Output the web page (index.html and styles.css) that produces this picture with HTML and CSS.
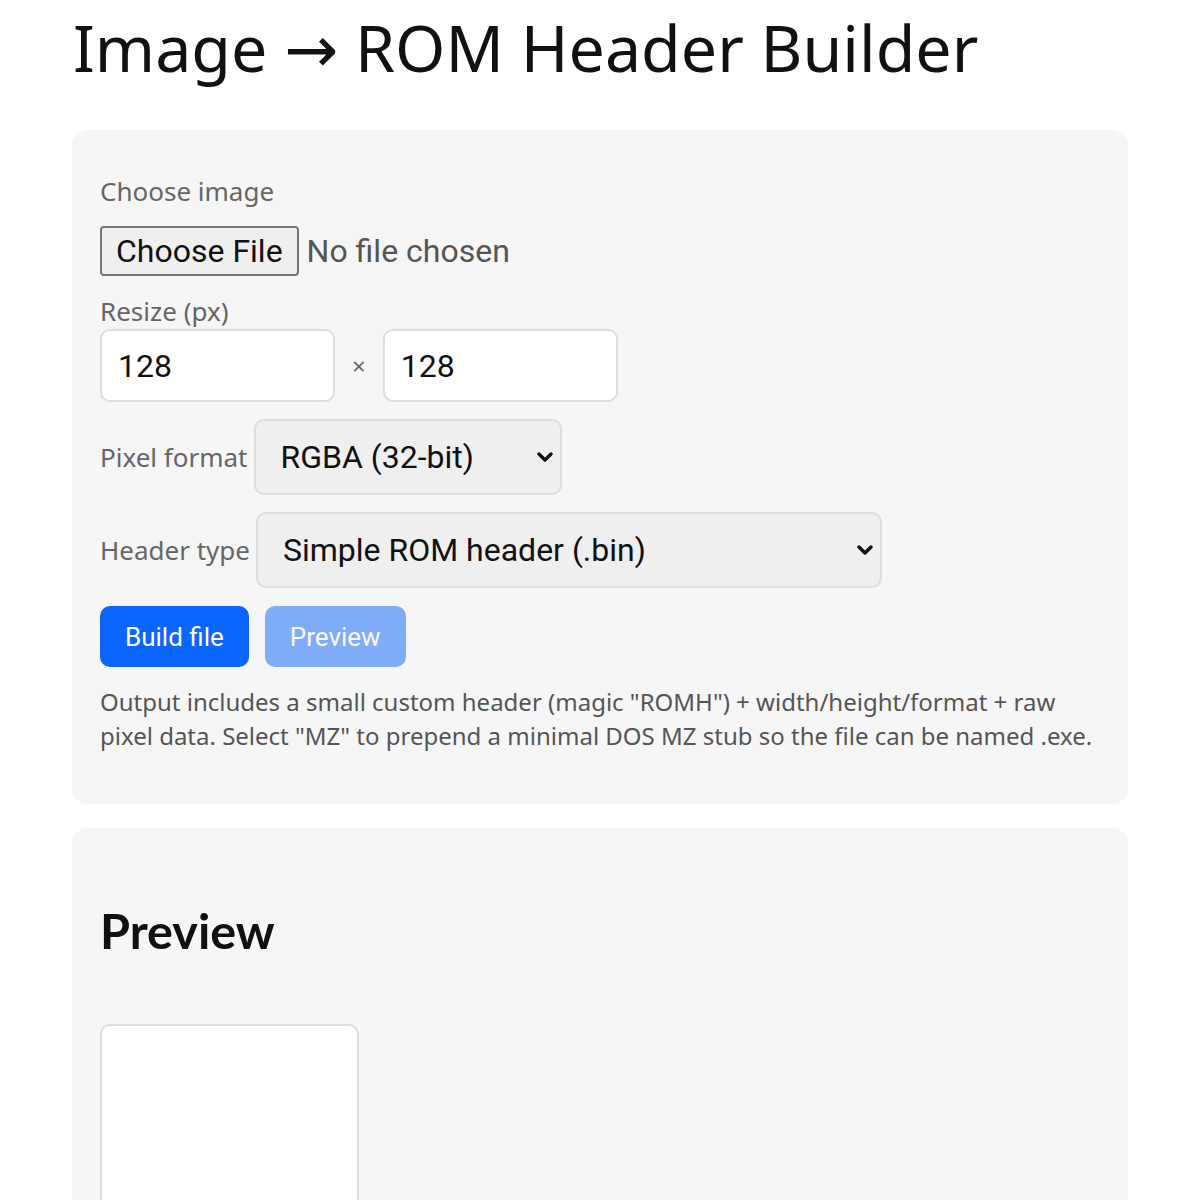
FILE: index.html
```html
<!DOCTYPE html>
<html lang="en">
<head>
    <meta charset="UTF-8" />
    <meta name="viewport" content="width=device-width, initial-scale=1" />
    <title>Image → ROM Header Builder</title>
    <link rel="stylesheet" href="styles.css">
</head>
<body>
    <h1>Image → ROM Header Builder</h1>

    <section class="card" id="builder">
        <label class="field-label" for="file-input">Choose image</label>
        <input type="file" id="file-input" accept="image/*" />

        <label class="field-label" for="width-input">Resize (px)</label>
        <div class="size-row">
            <input type="number" id="width-input" class="size-input" value="128" min="1" />
            <span class="times">×</span>
            <input type="number" id="height-input" class="size-input" value="128" min="1" />
        </div>

        <div class="select-row">
            <label class="field-label inline" for="format-select">Pixel format</label>
            <div class="select-wrap">
                <select id="format-select" class="format-select">
                    <option value="rgba32">RGBA (32-bit)</option>
                    <option value="rgb24">RGB (24-bit)</option>
                    <option value="rgb565">RGB565 (16-bit)</option>
                    <option value="gray8">Grayscale (8-bit)</option>
                </select>
                <svg class="chevron" width="16" height="10" viewBox="0 0 16 10"><path d="M2 2 L8 8 L14 2" fill="none" stroke="#111" stroke-width="3.4" stroke-linecap="round" stroke-linejoin="round"/></svg>
            </div>
        </div>

        <div class="select-row">
            <label class="field-label inline" for="header-select">Header type</label>
            <div class="select-wrap">
                <select id="header-select" class="header-select">
                    <option value="simple">Simple ROM header (.bin)</option>
                    <option value="mz">MZ stub + ROM header (.exe)</option>
                </select>
                <svg class="chevron" width="16" height="10" viewBox="0 0 16 10"><path d="M2 2 L8 8 L14 2" fill="none" stroke="#111" stroke-width="3.4" stroke-linecap="round" stroke-linejoin="round"/></svg>
            </div>
        </div>

        <div class="button-row">
            <button id="build-button" class="primary-button">Build file</button>
            <button id="preview-button" class="primary-button" disabled>Preview</button>
        </div>

        <p class="help-text">Output includes a small custom header (magic "ROMH") + width/height/format + raw pixel data. Select "MZ" to prepend a minimal DOS MZ stub so the file can be named .exe.</p>
    </section>

    <section class="card" id="preview">
        <h2>Preview</h2>
        <div class="preview-box">
            <canvas id="preview-canvas" width="128" height="128"></canvas>
        </div>
    </section>
</body>
</html>
```

FILE: styles.css
```css
body {
    font-family: 'Noto Sans', 'DejaVu Sans', sans-serif;
    background: #ffffff;
    color: #111111;
    margin: 0;
    padding: 0 72px;
}
h1 {
    font-size: 64.5px;
    font-weight: 400;
    margin: 3px 0 39px 1px;
    line-height: 88px;
}
.card {
    background: #f6f6f6;
    border-radius: 16px;
    padding: 43px 28px 51px;
    margin-bottom: 24px;
}
.field-label {
    display: block;
    font-size: 26px;
    color: #666666;
    line-height: 36px;
}
.field-label.inline {
    display: inline-block;
}
#file-input {
    display: block;
    margin: 17px 0 17px;
    font-family: 'Roboto', sans-serif;
    font-size: 32px;
    color: #555555;
}
#file-input::file-selector-button {
    font-family: 'Roboto', sans-serif;
    font-size: 32px;
    color: #111111;
    background: #efefef;
    border: 2px solid #767676;
    border-radius: 4px;
    padding: 4px 14px;
    margin-right: 8px;
}
.size-row {
    display: flex;
    align-items: center;
    gap: 17px;
    margin-bottom: 17px;
}
.size-input {
    box-sizing: border-box;
    width: 235px;
    height: 73px;
    padding: 0 16px;
    font-family: 'Roboto', sans-serif;
    font-size: 32px;
    color: #111111;
    background: #ffffff;
    border: 2px solid #dddddd;
    border-radius: 10px;
    outline: none;
    -moz-appearance: textfield;
}
.size-input::-webkit-inner-spin-button,
.size-input::-webkit-outer-spin-button {
    -webkit-appearance: none;
    margin: 0;
}
.times {
    font-size: 24px;
    color: #666666;
}
.select-row {
    display: flex;
    align-items: center;
    gap: 6px;
    margin-bottom: 17px;
}
.select-wrap {
    position: relative;
    display: flex;
}
.select-wrap select {
    box-sizing: border-box;
    height: 76px;
    padding: 0 40px 0 25px;
    font-family: 'Roboto', sans-serif;
    font-size: 32px;
    color: #111111;
    background-color: #efefef;
    border: 2px solid #dddddd;
    border-radius: 10px;
    appearance: none;
    -webkit-appearance: none;
    outline: none;
}
.chevron {
    position: absolute;
    right: 9px;
    top: 50%;
    margin-top: -5px;
    pointer-events: none;
}
.format-select {
    width: 308px;
}
.header-select {
    width: 626px;
}
.button-row {
    display: flex;
    gap: 16px;
    margin-top: 18px;
}
.primary-button {
    height: 61px;
    padding: 0 25px;
    font-family: 'Roboto', sans-serif;
    font-size: 26px;
    color: #ffffff;
    background-color: #0a66ff;
    border: none;
    border-radius: 10px;
    cursor: pointer;
}
.primary-button:disabled {
    opacity: 0.5;
    cursor: default;
}
.help-text {
    font-size: 24px;
    line-height: 34px;
    color: #555555;
    margin: 18px 0 0;
}
h2 {
    font-family: 'Lato', sans-serif;
    font-size: 48.5px;
    font-weight: 700;
    margin: 30px 0 65px;
}
.preview-box {
    box-sizing: border-box;
    width: 259px;
    height: 259px;
    background: #ffffff;
    border: 2px solid #dddddd;
    border-radius: 10px;
    overflow: hidden;
}
.preview-box canvas {
    display: none;
}
```
